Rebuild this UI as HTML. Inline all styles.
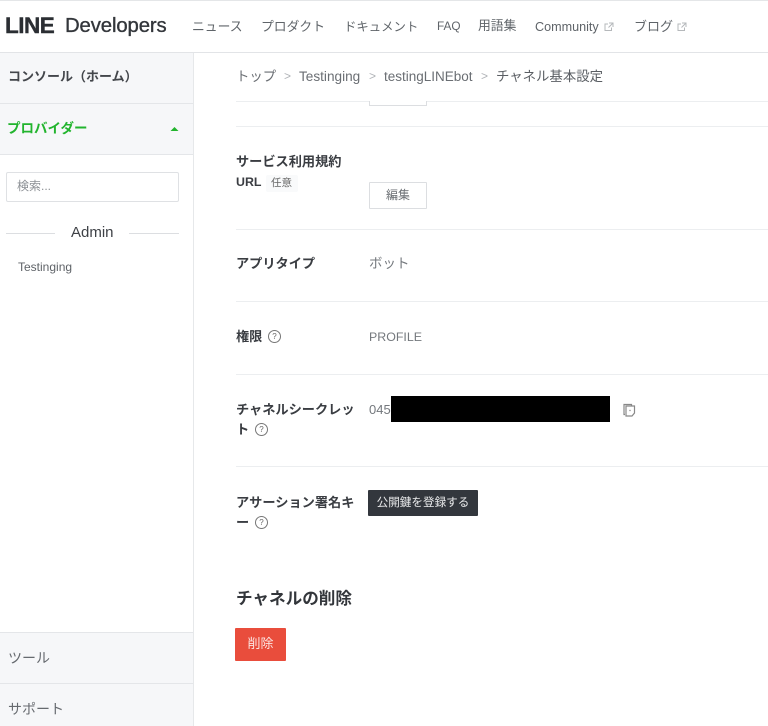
<!DOCTYPE html>
<html lang="ja">
<head>
<meta charset="utf-8">
<style>
html,body{margin:0;padding:0;width:768px;height:726px;overflow:hidden;background:#fff;font-family:"Liberation Sans","Noto Sans CJK JP",sans-serif;color:#555}
#w{position:absolute;left:0;top:0;width:768px;height:726px;filter:blur(.35px)}
.a{position:absolute;white-space:nowrap;line-height:1}
.l{position:absolute;background:#eceef0;height:1px}
.b{font-weight:700;color:#3a3d42;font-size:13.2px}
.n{font-size:13px;color:#5f6469}
.q{position:absolute;width:11px;height:11px;border:1px solid #777;border-radius:50%;font-size:8px;line-height:11px;text-align:center;color:#666}
.ext{position:absolute}
</style>
</head>
<body>
<div id="w">
<div class="l" style="left:0;top:0;width:768px;height:1px;background:#e4e6e8"></div>
<div class="l" style="left:0;top:52px;width:768px;background:#e2e4e7"></div>

<div class="a" style="left:5px;top:15px;font-size:22.5px;font-weight:700;color:#2b2e33;letter-spacing:-.5px;-webkit-text-stroke:.4px #2b2e33">LINE</div>
<div class="a" style="left:65px;top:16px;font-size:20.3px;font-weight:400;color:#33363b;-webkit-text-stroke:.35px #33363b;letter-spacing:-.1px">Developers</div>
<div class="a n" style="left:192px;top:21px;font-size:12.8px">ニュース</div>
<div class="a n" style="left:261px;top:21px;font-size:12.8px">プロダクト</div>
<div class="a n" style="left:344px;top:21px;font-size:12.4px">ドキュメント</div>
<div class="a n" style="left:437px;top:21px;font-size:11.8px">FAQ</div>
<div class="a n" style="left:478px;top:20px;font-size:12.8px">用語集</div>
<div class="a n" style="left:535px;top:21px;font-size:12.6px">Community</div>
<svg class="ext" style="left:604px;top:22px" width="10" height="10" viewBox="0 0 10 10" fill="none" stroke="#b5b8bb"><path d="M7.5 5.5v3h-6.5v-6.5h3M5 1h4v4M9 1L4.5 5.5"/></svg>
<div class="a n" style="left:634px;top:20px">ブログ</div>
<svg class="ext" style="left:677px;top:22px" width="10" height="10" viewBox="0 0 10 10" fill="none" stroke="#b5b8bb"><path d="M7.5 5.5v3h-6.5v-6.5h3M5 1h4v4M9 1L4.5 5.5"/></svg>

<!-- sidebar -->
<div style="position:absolute;left:0;top:53px;width:193px;height:101px;background:#f6f7f9"></div>
<div style="position:absolute;left:0;top:633px;width:193px;height:93px;background:#f6f7f9"></div>
<div class="l" style="left:193px;top:53px;width:1px;height:673px;background:#e6e8ea"></div>
<div class="l" style="left:0;top:103px;width:193px;background:#e4e6e9"></div>
<div class="l" style="left:0;top:154px;width:193px;background:#e4e6e9"></div>
<div class="l" style="left:0;top:632px;width:193px;background:#e4e6e9"></div>
<div class="l" style="left:0;top:683px;width:193px;background:#e4e6e9"></div>
<div class="a" style="left:8px;top:70px;font-size:13px;font-weight:700;color:#43464b">コンソール（ホーム）</div>
<div class="a" style="left:7px;top:122px;font-size:13.5px;font-weight:700;color:#22b42e">プロバイダー</div>
<svg class="ext" style="left:170px;top:126px" width="9" height="6" viewBox="0 0 9 6"><path d="M4.5 1L8.5 5H.5z" fill="#22b42e"/></svg>
<div style="position:absolute;left:6px;top:172px;width:171px;height:28px;border:1px solid #dfe1e4;border-radius:2px;background:#fff"></div>
<div class="a" style="left:17px;top:180px;font-size:12px;color:#8c9095">検索...</div>
<div class="l" style="left:6px;top:233px;width:49px;background:#dcdee1"></div>
<div class="l" style="left:129px;top:233px;width:50px;background:#dcdee1"></div>
<div class="a" style="left:71px;top:225px;font-size:15px;color:#3e4146">Admin</div>
<div class="a" style="left:18px;top:261px;font-size:12px;color:#5f6368">Testinging</div>
<div class="a" style="left:8px;top:651px;font-size:14px;color:#666a6f">ツール</div>
<div class="a" style="left:8px;top:702px;font-size:14px;color:#666a6f">サポート</div>

<!-- breadcrumb -->
<div class="a" style="left:236px;top:70px;font-size:13.4px;color:#6a6e73">トップ</div>
<div class="a" style="left:284px;top:70px;font-size:12px;color:#b0b3b7">&gt;</div>
<div class="a" style="left:299px;top:70px;font-size:13.6px;color:#6a6e73">Testinging</div>
<div class="a" style="left:369px;top:70px;font-size:12px;color:#b0b3b7">&gt;</div>
<div class="a" style="left:384px;top:70px;font-size:13.5px;color:#6a6e73">testingLINEbot</div>
<div class="a" style="left:481px;top:70px;font-size:12px;color:#b0b3b7">&gt;</div>
<div class="a" style="left:496px;top:70px;font-size:13.4px;color:#5a5e63">チャネル基本設定</div>
<div class="l" style="left:236px;top:101px;width:532px"></div>
<div style="position:absolute;left:369px;top:101px;width:56px;height:4px;border:1px solid #dcdee1;border-top:0;background:#fff"></div>

<!-- rows -->
<div class="l" style="left:236px;top:126px;width:532px"></div>
<div class="a b" style="left:236px;top:155px">サービス利用規約</div>
<div class="a b" style="left:236px;top:176px;font-size:12.4px">URL</div>
<div style="position:absolute;left:266px;top:175px;width:32px;height:17px;background:#f9fafb;border-radius:2px"></div>
<div class="a" style="left:271px;top:178px;font-size:10.5px;color:#666">任意</div>
<div style="position:absolute;left:369px;top:182px;width:56px;height:25px;border:1px solid #dcdee1;border-radius:1px;background:#fff;font-size:12px;line-height:25px;text-align:center;color:#6a6e73">編集</div>

<div class="l" style="left:236px;top:229px;width:532px"></div>
<div class="a b" style="left:236px;top:257px">アプリタイプ</div>
<div class="a" style="left:369px;top:257px;font-size:13.5px;color:#74787d">ボット</div>

<div class="l" style="left:236px;top:301px;width:532px"></div>
<div class="a b" style="left:236px;top:330px">権限</div>
<div class="q" style="left:268px;top:330px">?</div>
<div class="a" style="left:369px;top:331px;font-size:12.4px;color:#74787d">PROFILE</div>

<div class="l" style="left:236px;top:374px;width:532px"></div>
<div class="a b" style="left:236px;top:403px">チャネルシークレッ</div>
<div class="a b" style="left:236px;top:423px">ト</div>
<div class="q" style="left:255px;top:423px">?</div>
<div class="a" style="left:369px;top:403px;font-size:13px;color:#74787d">045</div>
<div style="position:absolute;left:391px;top:396px;width:219px;height:26px;background:#000"></div>
<svg class="ext" style="left:622px;top:403px" width="14" height="14" viewBox="0 0 14 14" fill="none" stroke="#888" stroke-width="1.2"><path d="M3 11.5H2V1.5h7.5v1"/><path d="M4 3h8.5v7l-2.5 3H4z"/><circle cx="8" cy="7.5" r=".7" fill="#888" stroke="none"/></svg>

<div class="l" style="left:236px;top:466px;width:532px"></div>
<div class="a b" style="left:236px;top:496px">アサーション署名キ</div>
<div class="a b" style="left:236px;top:516px">ー</div>
<div class="q" style="left:255px;top:516px">?</div>
<div style="position:absolute;left:368px;top:490px;width:110px;height:26px;background:#33373d;border-radius:1px;color:#e8e9ea;font-size:11.6px;line-height:26px;text-align:center">公開鍵を登録する</div>

<div class="a" style="left:236px;top:591px;font-size:16.6px;font-weight:700;color:#33363b">チャネルの削除</div>
<div style="position:absolute;left:235px;top:628px;width:51px;height:33px;background:#e94d3c;border-radius:1px;color:#fbe3e0;font-size:13px;line-height:31px;text-align:center">削除</div>
</div>
</body>
</html>
